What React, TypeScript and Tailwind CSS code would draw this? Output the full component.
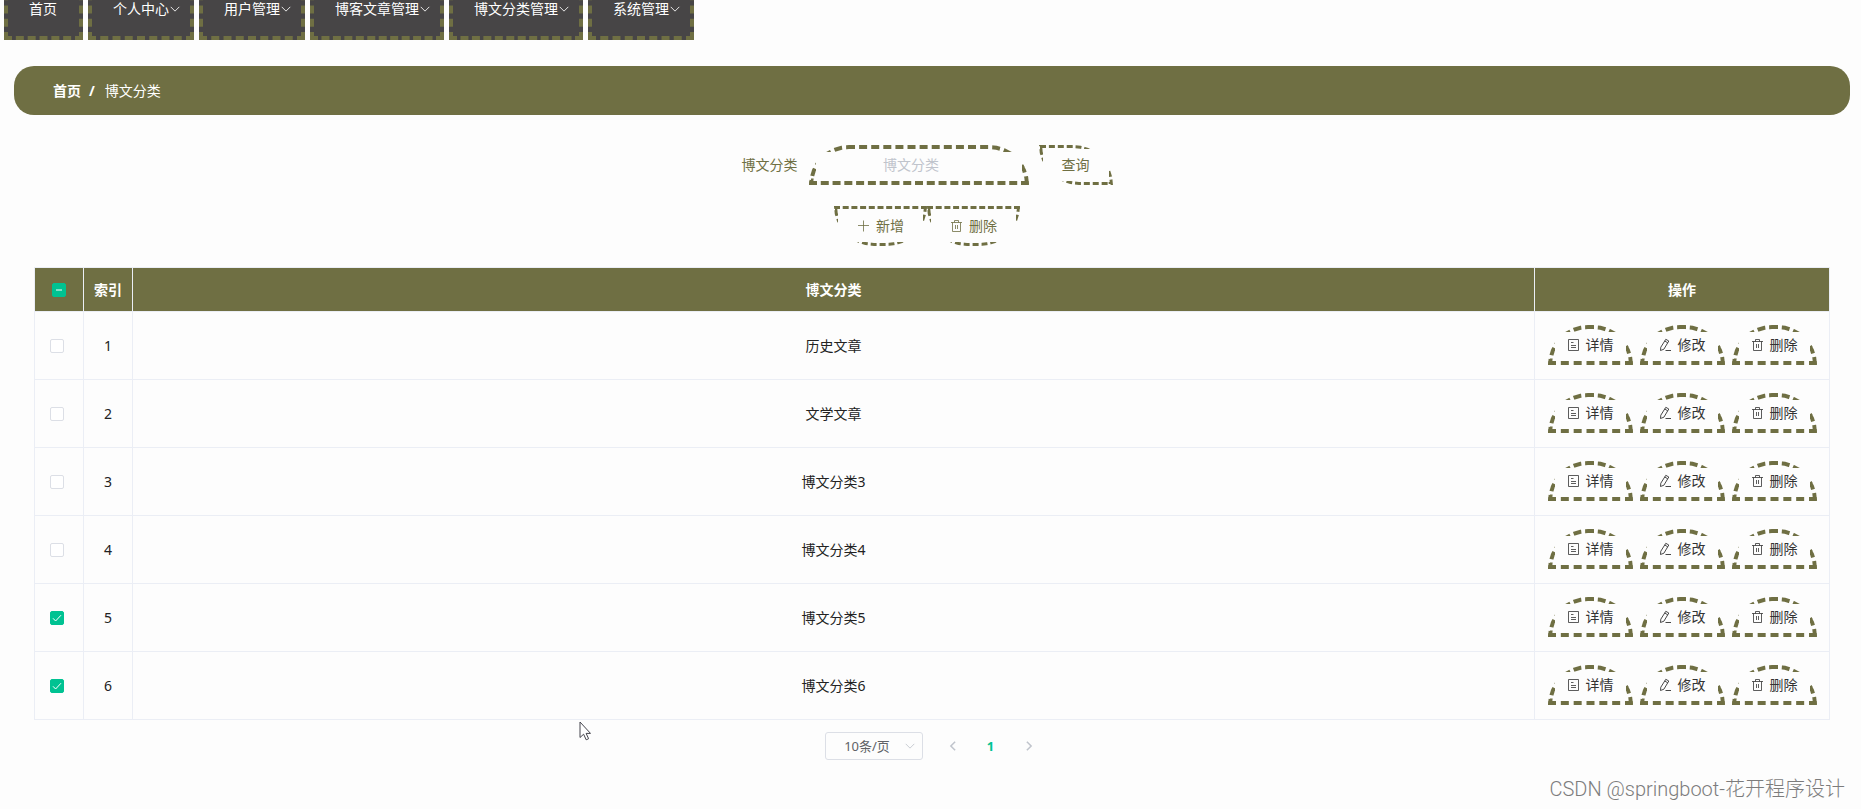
import React, { useEffect, useRef, useState } from 'react';

const navItems = [
  { label: '首页', hasMenu: false },
  { label: '个人中心', hasMenu: true },
  { label: '用户管理', hasMenu: true },
  { label: '博客文章管理', hasMenu: true },
  { label: '博文分类管理', hasMenu: true },
  { label: '系统管理', hasMenu: true },
];

const rows = [
  { id: 1, name: '历史文章' },
  { id: 2, name: '文学文章' },
  { id: 3, name: '博文分类3' },
  { id: 4, name: '博文分类4' },
  { id: 5, name: '博文分类5' },
  { id: 6, name: '博文分类6' },
];

type IconProps = { className?: string };

const iconProps = {
  viewBox: '0 0 14 14',
  fill: 'none',
  stroke: 'currentColor',
  'aria-hidden': true,
} as const;

const ChevronDown = ({ className = 'size-3' }: IconProps) => (
  <svg {...iconProps} className={className}>
    <path d="M2 4.5 7 9.5 12 4.5" />
  </svg>
);

const ChevronSide = ({ flip = false }: { flip?: boolean }) => (
  <svg {...iconProps} strokeWidth="1.8" className={flip ? 'size-3 rotate-180' : 'size-3'}>
    <path d="M9.5 2 4.5 7 9.5 12" />
  </svg>
);

const PlusIcon = () => (
  <svg {...iconProps} strokeWidth="0.8" className="size-3.5">
    <path d="M6.5 1.5v11M1 6.5h11" />
  </svg>
);

const TrashIcon = () => (
  <svg {...iconProps} strokeWidth="0.8" className="size-3.5">
    <path d="M1 3.5h11M2.5 3.5v9h8v-9M4.5 3.5v-2h4v2M5.5 6v4M7.5 6v4" />
  </svg>
);

const DocumentIcon = () => (
  <svg {...iconProps} strokeWidth="0.8" className="size-3.5">
    <path d="M1.5 1.500h10v11h-10zM4 4.500h2.500M4 7.500h5M4 9.500h5" />
  </svg>
);

const EditIcon = () => (
  <svg {...iconProps} strokeWidth="0.9" className="size-3.5">
    <path d="M6.800 1.300 9.800 3 4.900 11.200 1.500 12.500 1.800 9.200zM5.800 3 8.700 4.800M6.500 12.500h5.500" />
  </svg>
);

type CheckboxProps = {
  label: string;
  checked: boolean;
  indeterminate?: boolean;
  onChange: () => void;
};

const Checkbox = ({ label, checked, indeterminate = false, onChange }: CheckboxProps) => {
  const ref = useRef<HTMLInputElement>(null);

  useEffect(() => {
    if (ref.current) ref.current.indeterminate = indeterminate;
  }, [indeterminate]);

  return (
    <span className="relative block size-3.5">
      <input
        ref={ref}
        type="checkbox"
        aria-label={label}
        checked={checked}
        onChange={onChange}
        className="block size-3.5 appearance-none rounded-xs border border-[#dcdfe6] bg-white checked:border-[#00c292] checked:bg-[#00c292] indeterminate:border-[#00c292] indeterminate:bg-[#00c292]"
      />
      {(checked || indeterminate) && (
        <svg {...iconProps} className="pointer-events-none absolute inset-0 size-3.5 text-white">
          <path d={indeterminate ? 'M4 7h6' : 'M3 7.3 5.6 10 11 4.2'} />
        </svg>
      )}
    </span>
  );
};

type ButtonProps = { icon: React.ReactNode; children: React.ReactNode };

// the square inner fill cuts the dashed frame open at its round corners
const RowButton = ({ icon, children }: ButtonProps) => (
  <button type="button" className="rounded-t-[40px] border-4 border-dashed border-[#6f6f43] p-[3px] text-[#333]">
    <span className="flex h-[26px] items-center gap-[5px] bg-[#fdfdfd] px-3">
      {icon}
      <span>{children}</span>
    </span>
  </button>
);

const ToolButton = ({ icon, children }: ButtonProps) => (
  <button type="button" className="rounded-b-[40px] border-3 border-dashed border-[#6f6f43] p-px">
    <span className="flex h-8 items-center gap-[5px] bg-[#fdfdfd] px-[19px]">
      {icon}
      <span>{children}</span>
    </span>
  </button>
);

export default function App() {
  const [selected, setSelected] = useState<number[]>([5, 6]);
  const [keyword, setKeyword] = useState('');

  const allSelected = selected.length === rows.length;

  const toggle = (id: number) =>
    setSelected(selected.includes(id) ? selected.filter((item) => item !== id) : [...selected, id]);

  return (
    <div className="relative min-h-screen overflow-hidden bg-[#fdfdfd] font-['Noto_Sans','Noto_Sans_CJK_SC',sans-serif] text-sm text-[#6f6f43]">
      <nav className="-mt-[21px] flex gap-[5px] pl-1">
        {navItems.map((item) => (
          <a
            key={item.label}
            href="#"
            className={`flex h-[61px] items-center border-4 border-dashed border-[#6f6f43] bg-[#474546] pb-px pl-[21px] text-white ${
              item.hasMenu ? 'pr-[9px]' : 'pr-[22px]'
            }`}
          >
            {item.label}
            {item.hasMenu && <ChevronDown />}
          </a>
        ))}
      </nav>

      <main className="mt-[26px] mr-[11px] ml-3.5">
        <div className="flex h-[49px] items-center rounded-[20px] bg-[#6f6f43] pl-[39px] text-white">
          <a href="#" className="font-bold">首页</a>
          <span className="mr-2.5 ml-2 font-bold">/</span>
          <span>博文分类</span>
        </div>

        <div className="px-5">
          <form className="mt-[30px] flex items-center justify-center pr-2.5" onSubmit={(e) => e.preventDefault()}>
            <label htmlFor="keyword" className="mr-[11px]">博文分类</label>
            <div className="w-[220px] rounded-t-[40px] border-4 border-dashed border-[#6f6f43] p-[3px]">
              <input
                id="keyword"
                type="text"
                value={keyword}
                onChange={(e) => setKeyword(e.target.value)}
                placeholder="博文分类"
                className="block h-[26px] w-full bg-[#fdfdfd] pr-[27px] pb-0.5 pl-3 text-center outline-none placeholder:text-[#c0c4cc]"
              />
            </div>
            <button
              type="submit"
              className="ml-2.5 rounded-tr-[40px] rounded-bl-[40px] border-3 border-dashed border-[#6f6f43] p-px"
            >
              <span className="flex h-8 items-center bg-[#fdfdfd] px-[19px]">查询</span>
            </button>
          </form>

          <div className="mt-[21px] flex justify-center pr-2.5">
            <ToolButton icon={<PlusIcon />}>新增</ToolButton>
            <ToolButton icon={<TrashIcon />}>删除</ToolButton>
          </div>

          <table className="mt-[21px] w-full table-fixed border-collapse text-center text-[#222]">
            <colgroup>
              <col className="w-[49px]" />
              <col className="w-[49px]" />
              <col />
              <col className="w-[295px]" />
            </colgroup>
            <thead>
              <tr className="h-11 bg-[#6f6f43] text-white">
                <th className="border border-[#ebeef5] pl-[17px]">
                  <Checkbox
                    label="全选"
                    checked={allSelected}
                    indeterminate={selected.length > 0 && !allSelected}
                    onChange={() => setSelected(allSelected ? [] : rows.map((row) => row.id))}
                  />
                </th>
                <th className="border border-[#ebeef5]">索引</th>
                <th className="border border-[#ebeef5]">博文分类</th>
                <th className="border border-[#ebeef5]">操作</th>
              </tr>
            </thead>
            <tbody>
              {rows.map((row) => (
                <tr key={row.id} className="h-[68px]">
                  <td className="border border-[#ebeef5] pl-[15px]">
                    <Checkbox
                      label={`选择 ${row.name}`}
                      checked={selected.includes(row.id)}
                      onChange={() => toggle(row.id)}
                    />
                  </td>
                  <td className="border border-[#ebeef5]">{row.id}</td>
                  <td className="border border-[#ebeef5]">{row.name}</td>
                  <td className="border border-[#ebeef5] pb-0.5">
                    <div className="flex justify-center gap-[7px]">
                      <RowButton icon={<DocumentIcon />}>详情</RowButton>
                      <RowButton icon={<EditIcon />}>修改</RowButton>
                      <RowButton icon={<TrashIcon />}>删除</RowButton>
                    </div>
                  </td>
                </tr>
              ))}
            </tbody>
          </table>

          <div className="mt-3 flex items-center justify-center pl-1 text-[13px]">
            <div className="relative">
              <select
                aria-label="每页条数"
                className="block h-7 w-[98px] appearance-none rounded-[3px] border border-[#dcdfe6] pr-[13px] text-center text-[#606266]"
              >
                <option>10条/页</option>
                <option>20条/页</option>
              </select>
              <ChevronDown className="pointer-events-none absolute top-2 right-[7px] size-3 text-[#c0c4cc]" />
            </div>
            <button type="button" aria-label="上一页" className="ml-[15px] flex h-7 w-[30px] items-center justify-center text-[#c0c4cc]">
              <ChevronSide />
            </button>
            <button type="button" className="mx-2 h-7 w-[30px] font-bold text-[#00c292]">1</button>
            <button type="button" aria-label="下一页" className="flex h-7 w-[30px] items-center justify-center text-[#c0c4cc]">
              <ChevronSide flip />
            </button>
          </div>
        </div>
      </main>

      {/* mouse pointer */}
      <svg viewBox="0 0 12 20" className="absolute top-[721px] left-[579px] h-5 w-3" aria-hidden>
        <path d="M1 1v15.500l3.600-3.300 2.600 5.600 2.400-1.100-2.500-5.300h4.400z" fill="#fff" stroke="#44444c" />
      </svg>

      <p className="absolute right-4 bottom-1.5 font-[Roboto,'Noto_Sans_CJK_SC',sans-serif] text-xl font-light text-[#7c7c7c]">
        CSDN @springboot-花开程序设计
      </p>
    </div>
  );
}
